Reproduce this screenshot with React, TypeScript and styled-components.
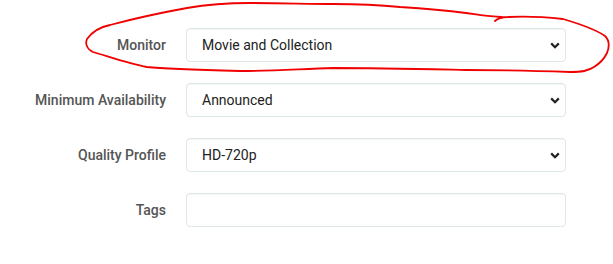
import styled, { createGlobalStyle } from "styled-components";

const GlobalStyle = createGlobalStyle`
  html, body {
    margin: 0;
    padding: 0;
    background: #fff;
  }
  body {
    font-family: Roboto, "Liberation Sans", sans-serif;
  }
`;

const Page = styled.div`
  position: relative;
  width: 613px;
  height: 264px;
  overflow: hidden;
`;

const Form = styled.form`
  display: flex;
  flex-direction: column;
  gap: 21px;
  padding-top: 28px;
`;

const Row = styled.div`
  display: flex;
  align-items: center;
  gap: 20px;
`;

const Label = styled.label`
  width: 166px;
  text-align: right;
  font-size: 14px;
  font-weight: 500;
  color: #555;
`;

const Control = styled.div`
  box-sizing: border-box;
  width: 380px;
  height: 34px;
  display: flex;
  align-items: center;
  justify-content: space-between;
  padding: 0 5px 0 15px;
  border: 1px solid #dde6e9;
  border-radius: 4px;
  background: #fff;
  box-shadow: inset 0 1px 1px rgba(0, 0, 0, 0.04);
  font-size: 14px;
  color: #222;
`;

const Chevron = () => (
  <svg width="10" height="7" viewBox="0 0 10 7">
    <path d="M1.2 1.4 L5 5.2 L8.8 1.4" fill="none" stroke="#222" strokeWidth="2.2" />
  </svg>
);

const Annotation = styled.svg`
  position: absolute;
  left: 0;
  top: 0;
  pointer-events: none;
`;

const fields = [
  { label: "Monitor", value: "Movie and Collection", select: true },
  { label: "Minimum Availability", value: "Announced", select: true },
  { label: "Quality Profile", value: "HD-720p", select: true },
  { label: "Tags", value: "", select: false },
];

export default function App() {
  return (
    <Page>
      <GlobalStyle />
      <Form>
        {fields.map((f) => (
          <Row key={f.label}>
            <Label>{f.label}</Label>
            <Control>
              <span>{f.value}</span>
              {f.select && <Chevron />}
            </Control>
          </Row>
        ))}
      </Form>
      <Annotation width="613" height="264" viewBox="0 0 613 264">
        <path
          d="M495 21 C498 18 502 17 508 17 C525 16 545 17 563 19 C580 24 595 29 605 36 C610 41 609 48 607 53 C604 59 599 64 594 67 C588 71 582 72 570 72 C540 71 500 70 466 70 C420 69 380 68 333 68 C300 69 270 71 240 71 C200 70 165 69 147 67 C130 64 110 57 93 52 C87 49 85 44 87 39 C92 32 100 27 110 25 C140 17 165 12 187 8 C210 4 230 3 250 3 C280 3 310 4 333 4 C360 4 380 5 400 7 C430 9 450 11 466 13 C480 15 490 17 502 17"
          fill="none"
          stroke="#f00000"
          strokeWidth="1.8"
          strokeLinecap="round"
          strokeLinejoin="round"
        />
      </Annotation>
    </Page>
  );
}
